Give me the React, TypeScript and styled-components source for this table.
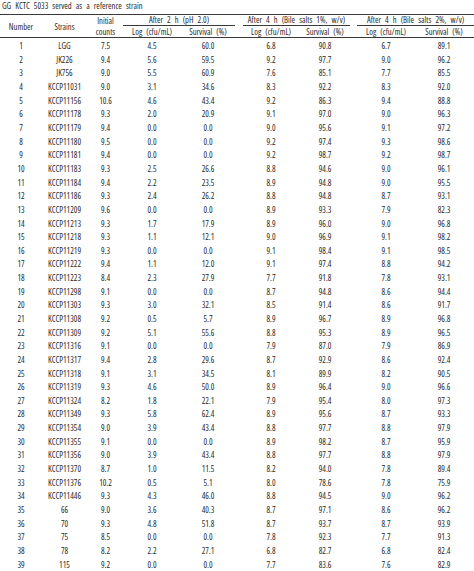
import React from 'react';
import styled, { createGlobalStyle, css } from 'styled-components';

const GlobalStyle = createGlobalStyle`
  html, body {
    margin: 0;
    padding: 0;
    background: #ffffff;
  }
  body {
    font-family: "Open Sans", "Liberation Sans", Arial, sans-serif;
    font-stretch: 75%;
    color: #2b2b2b;
  }
`;

const Caption = styled.div`
  height: 14px;
  line-height: 11px;
  font-size: 8.5px;
  word-spacing: 2.5px;
  padding-left: 2px;
  white-space: nowrap;
`;

const Table = styled.table`
  width: 474px;
  table-layout: fixed;
  border-collapse: collapse;
  font-size: 8.5px;
  word-spacing: 2.5px;
  border-top: 1px solid #3a3a3a;
`;

const Col = styled.col<{ $w: number }>`
  width: ${({ $w }) => $w}px;
`;

const Head = styled.thead`
  border-bottom: 1px solid #3a3a3a;
`;

const HeadRow = styled.tr`
  height: 11px;
`;

const shiftCss = (shift: number) => css`
  padding-left: ${shift > 0 ? shift * 2 : 0}px;
  padding-right: ${shift < 0 ? -shift * 2 : 0}px;
`;

const HeadCell = styled.th<{ $shift?: number }>`
  font-weight: normal;
  text-align: center;
  vertical-align: middle;
  white-space: nowrap;
  line-height: 11px;
  padding: 0;
  ${({ $shift = 0 }) => shiftCss($shift)}
`;

const GroupCell = styled.th<{ $left: number; $right: number }>`
  font-weight: normal;
  padding: 0 ${({ $right }) => $right}px 0 ${({ $left }) => $left}px;
  vertical-align: top;
`;

const GroupLabel = styled.span`
  display: block;
  text-align: center;
  white-space: nowrap;
  line-height: 10px;
  border-bottom: 1px solid #3a3a3a;
`;

const Row = styled.tr`
  &:first-child td {
    padding-top: 1.2px;
  }
`;

const Cell = styled.td<{ $shift?: number }>`
  text-align: center;
  white-space: nowrap;
  line-height: 13.64px;
  padding: 0;
  ${({ $shift = 0 }) => shiftCss($shift)}
`;

const columns = [
  { w: 42, shift: 0 },
  { w: 45, shift: 0 },
  { w: 36, shift: 0.5 },
  { w: 57, shift: 0.5 },
  { w: 57, shift: -0.5 },
  { w: 64, shift: 2 },
  { w: 51, shift: -1.5 },
  { w: 64, shift: 2 },
  { w: 58, shift: -1 },
];

const raw = `1 LGG 7.5 4.5 60.0 6.8 90.8 6.7 89.1
2 JK226 9.4 5.6 59.5 9.2 97.7 9.0 96.2
3 JK756 9.0 5.5 60.9 7.6 85.1 7.7 85.5
4 KCCP11031 9.0 3.1 34.6 8.3 92.2 8.3 92.0
5 KCCP11156 10.6 4.6 43.4 9.2 86.3 9.4 88.8
6 KCCP11178 9.3 2.0 20.9 9.1 97.0 9.0 96.3
7 KCCP11179 9.4 0.0 0.0 9.0 95.6 9.1 97.2
8 KCCP11180 9.5 0.0 0.0 9.2 97.4 9.3 98.6
9 KCCP11181 9.4 0.0 0.0 9.2 98.7 9.2 98.7
10 KCCP11183 9.3 2.5 26.6 8.8 94.6 9.0 96.1
11 KCCP11184 9.4 2.2 23.5 8.9 94.8 9.0 95.5
12 KCCP11186 9.3 2.4 26.2 8.8 94.8 8.7 93.1
13 KCCP11209 9.6 0.0 0.0 8.9 93.3 7.9 82.3
14 KCCP11213 9.3 1.7 17.9 8.9 96.0 9.0 96.8
15 KCCP11218 9.3 1.1 12.1 9.0 96.9 9.1 98.2
16 KCCP11219 9.3 0.0 0.0 9.1 98.4 9.1 98.5
17 KCCP11222 9.4 1.1 12.0 9.1 97.4 8.8 94.2
18 KCCP11223 8.4 2.3 27.9 7.7 91.8 7.8 93.1
19 KCCP11298 9.1 0.0 0.0 8.7 94.8 8.6 94.4
20 KCCP11303 9.3 3.0 32.1 8.5 91.4 8.6 91.7
21 KCCP11308 9.2 0.5 5.7 8.9 96.7 8.9 96.8
22 KCCP11309 9.2 5.1 55.6 8.8 95.3 8.9 96.5
23 KCCP11316 9.1 0.0 0.0 7.9 87.0 7.9 86.9
24 KCCP11317 9.4 2.8 29.6 8.7 92.9 8.6 92.4
25 KCCP11318 9.1 3.1 34.5 8.1 89.9 8.2 90.5
26 KCCP11319 9.3 4.6 50.0 8.9 96.4 9.0 96.6
27 KCCP11324 8.2 1.8 22.1 7.9 95.4 8.0 97.3
28 KCCP11349 9.3 5.8 62.4 8.9 95.6 8.7 93.3
29 KCCP11354 9.0 3.9 43.4 8.8 97.7 8.8 97.9
30 KCCP11355 9.1 0.0 0.0 8.9 98.2 8.7 95.9
31 KCCP11356 9.0 3.9 43.4 8.8 97.7 8.8 97.9
32 KCCP11370 8.7 1.0 11.5 8.2 94.0 7.8 89.4
33 KCCP11376 10.2 0.5 5.1 8.0 78.6 7.8 75.9
34 KCCP11446 9.3 4.3 46.0 8.8 94.5 9.0 96.2
35 66 9.0 3.6 40.3 8.7 97.1 8.6 96.2
36 70 9.3 4.8 51.8 8.7 93.7 8.7 93.9
37 75 8.5 0.0 0.0 7.8 92.3 7.7 91.3
38 78 8.2 2.2 27.1 6.8 82.7 6.8 82.4
39 115 9.2 0.0 0.0 7.7 83.6 7.6 82.9`;

const rows = raw.split('\n').map((line) => line.trim().split(/\s+/));

const groups = [
  { label: 'After 2 h (pH 2.0)', left: 0, right: 2 },
  { label: 'After 4 h (Bile salts 1%, w/v)', left: 6, right: 2 },
  { label: 'After 4 h (Bile salts 2%, w/v)', left: 5, right: 0 },
];

const App: React.FC = () => {
  return (
    <>
      <GlobalStyle />
      <Caption>GG KCTC 5033 served as a reference strain</Caption>
      <Table>
        <colgroup>
          {columns.map((c, i) => (
            <Col key={i} $w={c.w} />
          ))}
        </colgroup>
        <Head>
          <HeadRow>
            <HeadCell rowSpan={2}>Number</HeadCell>
            <HeadCell rowSpan={2}>Strains</HeadCell>
            <HeadCell rowSpan={2} $shift={columns[2].shift}>
              Initial
              <br />
              counts
            </HeadCell>
            {groups.map((g) => (
              <GroupCell key={g.label} colSpan={2} $left={g.left} $right={g.right}>
                <GroupLabel>{g.label}</GroupLabel>
              </GroupCell>
            ))}
          </HeadRow>
          <HeadRow>
            {groups.map((g, i) => (
              <React.Fragment key={g.label}>
                <HeadCell $shift={columns[3 + i * 2].shift}>Log (cfu/mL)</HeadCell>
                <HeadCell $shift={columns[4 + i * 2].shift}>Survival (%)</HeadCell>
              </React.Fragment>
            ))}
          </HeadRow>
        </Head>
        <tbody>
          {rows.map((r) => (
            <Row key={r[0]}>
              {r.map((v, i) => (
                <Cell key={i} $shift={columns[i].shift}>
                  {v}
                </Cell>
              ))}
            </Row>
          ))}
        </tbody>
      </Table>
    </>
  );
};

export default App;
